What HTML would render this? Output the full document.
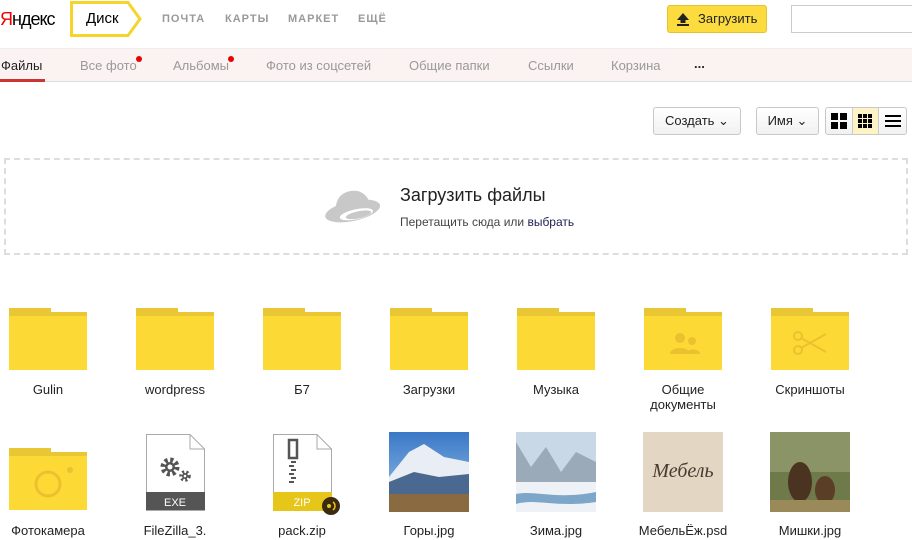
<!DOCTYPE html>
<html><head><meta charset="utf-8"><style>
*{margin:0;padding:0;box-sizing:border-box}
body{width:912px;height:540px;overflow:hidden;background:#fff;font-family:"Liberation Sans",sans-serif;position:relative}
.a{position:absolute}
.nav{font-size:11px;font-weight:bold;color:#999;letter-spacing:1px;top:13px}
.tab{font-size:13px;color:#999;top:58px}
.dot{width:6px;height:6px;border-radius:50%;background:#e00;position:absolute}
.btn{position:absolute;border:1px solid #c8c8c8;border-radius:3px;background:linear-gradient(#fff,#f1f1f1);font-size:13px;color:#222;text-align:center;line-height:26px;height:28px}
.f{position:absolute;width:78px;height:62px}
.f .t{position:absolute;left:0;top:0;width:42px;height:6px;background:#e9c634}
.f .t2{position:absolute;left:0;top:4px;width:78px;height:4px;background:#e9c634}
.f .b{position:absolute;left:0;top:8px;width:78px;height:54px;background:#fcd935}
.lbl{position:absolute;width:120px;text-align:center;font-size:13px;color:#222}
</style></head><body>
<div class="a" style="left:0;top:9px;font-size:18px;letter-spacing:-1px;color:#000"><span style="color:#e00">Я</span>ндекс</div>
<svg class="a" style="left:70px;top:1px" width="74" height="36"><path d="M1.5 1.5H58L70 18L58 34.5H1.5Z" fill="#fff" stroke="#f5d52a" stroke-width="3"/></svg>
<div class="a" style="left:86px;top:10px;font-size:15px;color:#000">Диск</div>
<div class="a nav" style="left:162px">ПОЧТА</div>
<div class="a nav" style="left:225px">КАРТЫ</div>
<div class="a nav" style="left:288px">МАРКЕТ</div>
<div class="a nav" style="left:358px">ЕЩЁ</div>
<div class="a" style="left:667px;top:5px;width:100px;height:28px;background:#fbdb3d;border:1px solid #e6c22c;border-radius:3px;font-size:13px;color:#222;line-height:26px;padding-left:30px">Загрузить</div>
<svg class="a" style="left:676px;top:12px" width="14" height="14"><path d="M7 1L13 8H9.5V11H4.5V8H1Z" fill="#222"/><rect x="1" y="12" width="12" height="2" fill="#222"/></svg>
<div class="a" style="left:791px;top:5px;width:130px;height:28px;border:1px solid #ccc"></div>
<div class="a" style="left:0;top:48px;width:912px;height:34px;background:#fbf3f1;border-top:1px solid #eee;border-bottom:1px solid #ddd"></div>
<div class="a tab" style="left:1px;color:#222">Файлы</div>
<div class="a" style="left:0;top:79px;width:45px;height:3px;background:#c33"></div>
<div class="a tab" style="left:80px">Все фото</div><div class="dot" style="left:136px;top:56px"></div>
<div class="a tab" style="left:173px">Альбомы</div><div class="dot" style="left:228px;top:56px"></div>
<div class="a tab" style="left:266px">Фото из соцсетей</div>
<div class="a tab" style="left:409px">Общие папки</div>
<div class="a tab" style="left:528px">Ссылки</div>
<div class="a tab" style="left:611px">Корзина</div>
<div class="a tab" style="left:694px;color:#222;font-weight:bold;top:56px">...</div>
<div class="btn" style="left:653px;top:107px;width:88px">Создать ⌄</div>
<div class="btn" style="left:756px;top:107px;width:63px">Имя ⌄</div>
<div class="btn" style="left:825px;top:107px;width:82px;padding:0"></div>
<div class="a" style="left:852px;top:108px;width:27px;height:26px;background:#fdf3c4;border-left:1px solid #ccc;border-right:1px solid #ccc"></div>
<svg class="a" style="left:830px;top:112px" width="75" height="18">
<rect x="1" y="1" width="7" height="7"/><rect x="10" y="1" width="7" height="7"/><rect x="1" y="10" width="7" height="7"/><rect x="10" y="10" width="7" height="7"/>
<g transform="translate(28,2)"><rect x="0" y="0" width="4" height="4"/><rect x="5" y="0" width="4" height="4"/><rect x="10" y="0" width="4" height="4"/><rect x="0" y="5" width="4" height="4"/><rect x="5" y="5" width="4" height="4"/><rect x="10" y="5" width="4" height="4"/><rect x="0" y="10" width="4" height="4"/><rect x="5" y="10" width="4" height="4"/><rect x="10" y="10" width="4" height="4"/></g>
<rect x="55" y="3" width="16" height="2"/><rect x="55" y="8" width="16" height="2"/><rect x="55" y="13" width="16" height="2"/></svg>
<div class="a" style="left:4px;top:158px;width:904px;height:97px;border:2px dashed #ddd"></div>
<svg class="a" style="left:322px;top:184px" width="60" height="42"><g transform="rotate(-12 30 24)"><path d="M14 22C16 9 28 4 40 9C45 12 48 17 48 22Z" fill="#c8c8c8"/><ellipse cx="30" cy="27" rx="28" ry="10" fill="#c8c8c8"/><ellipse cx="33" cy="31" rx="17" ry="5" fill="#fff"/><ellipse cx="35" cy="32" rx="13" ry="3.5" fill="#c8c8c8"/></g></svg>
<div class="a" style="left:400px;top:185px;font-size:18px;color:#222">Загрузить файлы</div>
<div class="a" style="left:400px;top:215px;font-size:12px;color:#444">Перетащить сюда или <span style="color:#225">выбрать</span></div>

<div class="f" style="left:9px;top:308px"><div class="t"></div><div class="t2"></div><div class="b"></div></div>
<div class="f" style="left:136px;top:308px"><div class="t"></div><div class="t2"></div><div class="b"></div></div>
<div class="f" style="left:263px;top:308px"><div class="t"></div><div class="t2"></div><div class="b"></div></div>
<div class="f" style="left:390px;top:308px"><div class="t"></div><div class="t2"></div><div class="b"></div></div>
<div class="f" style="left:517px;top:308px"><div class="t"></div><div class="t2"></div><div class="b"></div></div>
<div class="f" style="left:644px;top:308px"><div class="t"></div><div class="t2"></div><div class="b"></div></div>
<div class="f" style="left:771px;top:308px"><div class="t"></div><div class="t2"></div><div class="b"></div></div>
<svg class="a" style="left:790px;top:328px" width="40" height="30"><g fill="none" stroke="#eac22f" stroke-width="2"><circle cx="8" cy="8" r="4"/><circle cx="8" cy="22" r="4"/><path d="M11 10L36 24M11 20L36 6"/></g></svg>
<svg class="a" style="left:668px;top:330px" width="34" height="28"><g fill="#eac22f"><circle cx="12" cy="8" r="5"/><path d="M2 24C2 16 22 16 22 24Z"/><circle cx="24" cy="11" r="4"/><path d="M18 24C18 18 32 18 32 24Z"/></g></svg>
<div class="lbl" style="left:-12px;top:382px">Gulin</div>
<div class="lbl" style="left:115px;top:382px">wordpress</div>
<div class="lbl" style="left:242px;top:382px">Б7</div>
<div class="lbl" style="left:369px;top:382px">Загрузки</div>
<div class="lbl" style="left:496px;top:382px">Музыка</div>
<div class="lbl" style="left:623px;top:382px">Общие<br>документы</div>
<div class="lbl" style="left:750px;top:382px">Скриншоты</div>

<div class="f" style="left:9px;top:448px"><div class="t"></div><div class="t2"></div><div class="b"></div></div>
<svg class="a" style="left:30px;top:462px" width="46" height="42"><circle cx="18" cy="22" r="12" fill="none" stroke="#eac22f" stroke-width="3"/><circle cx="40" cy="8" r="3" fill="#eac22f"/></svg>
<svg class="a" style="left:146px;top:434px" width="60" height="78"><path d="M0.5 0.5H44L58.5 15V76.5H0.5Z" fill="#fff" stroke="#aaa"/><path d="M44 0.5V15H58.5" fill="none" stroke="#aaa"/><rect x="0" y="58" width="59" height="18" fill="#555"/><text x="29" y="72" font-size="11" fill="#fff" text-anchor="middle" font-family="Liberation Sans">EXE</text><circle cx="24" cy="33" r="7" fill="none" stroke="#555" stroke-width="5" stroke-dasharray="3 2.5"/><circle cx="24" cy="33" r="5" fill="#555"/><circle cx="24" cy="33" r="2.5" fill="#fff"/><circle cx="39" cy="42" r="4" fill="none" stroke="#555" stroke-width="3.5" stroke-dasharray="2 2"/><circle cx="39" cy="42" r="3" fill="#555"/><circle cx="39" cy="42" r="1.3" fill="#fff"/></svg>
<svg class="a" style="left:273px;top:434px" width="72" height="82"><path d="M0.5 0.5H44L58.5 15V76.5H0.5Z" fill="#fff" stroke="#aaa"/><path d="M44 0.5V15H58.5" fill="none" stroke="#aaa"/><rect x="0" y="58" width="59" height="19" fill="#e6c619"/><text x="29" y="72" font-size="11" fill="#fff" text-anchor="middle" font-family="Liberation Sans">ZIP</text><rect x="16" y="6" width="8" height="18" fill="none" stroke="#555" stroke-width="2.5"/><path d="M18 28h5M16 32h5M18 36h5M16 40h5M18 44h5M16 48h5" stroke="#555" stroke-width="2"/><circle cx="58" cy="72" r="9" fill="#3b2a10"/><circle cx="56" cy="72" r="2" fill="#e6c619"/><path d="M60 68a5 5 0 0 1 0 8" fill="none" stroke="#e6c619" stroke-width="1.5"/></svg>
<svg class="a" style="left:389px;top:432px" width="80" height="80"><defs><linearGradient id="s" x1="0" y1="0" x2="0" y2="1"><stop offset="0" stop-color="#3a78c6"/><stop offset="1" stop-color="#9cc6ea"/></linearGradient></defs><rect width="80" height="80" fill="url(#s)"/><path d="M0 45L20 20L35 12L55 25L80 30V60H0Z" fill="#e8eef4"/><path d="M0 50L25 40L50 45L80 42V65H0Z" fill="#4a6890"/><rect y="62" width="80" height="18" fill="#8a6a40"/></svg>
<svg class="a" style="left:516px;top:432px" width="80" height="80"><rect width="80" height="80" fill="#c8d8e6"/><path d="M0 10L15 35L30 15L45 40L60 20L80 30V55H0Z" fill="#9aaab8"/><rect y="50" width="80" height="30" fill="#eef2f6"/><path d="M0 62C20 58 40 68 80 60V70C40 76 20 66 0 72Z" fill="#7ea6c8"/></svg>
<svg class="a" style="left:643px;top:432px" width="80" height="80"><rect width="80" height="80" fill="#e3d6c3"/><text x="40" y="45" font-size="20" font-style="italic" fill="#4a3a30" text-anchor="middle" font-family="Liberation Serif">Мебель</text></svg>
<svg class="a" style="left:770px;top:432px" width="80" height="80"><rect width="80" height="80" fill="#6f7a4a"/><rect width="80" height="40" fill="#8a9466"/><ellipse cx="30" cy="50" rx="12" ry="20" fill="#4a3320"/><ellipse cx="55" cy="58" rx="10" ry="14" fill="#5a3e25"/><rect y="68" width="80" height="12" fill="#9a8a5a"/></svg>
<div class="lbl" style="left:-12px;top:523px">Фотокамера</div>
<div class="lbl" style="left:115px;top:523px">FileZilla_3.</div>
<div class="lbl" style="left:242px;top:523px">pack.zip</div>
<div class="lbl" style="left:369px;top:523px">Горы.jpg</div>
<div class="lbl" style="left:496px;top:523px">Зима.jpg</div>
<div class="lbl" style="left:623px;top:523px">МебельЁж.psd</div>
<div class="lbl" style="left:750px;top:523px">Мишки.jpg</div>
</body></html>
